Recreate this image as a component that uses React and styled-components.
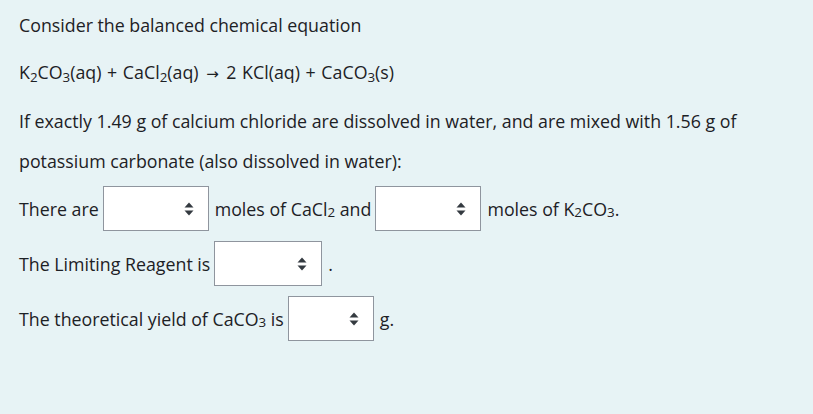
import React from 'react';
import styled, { createGlobalStyle } from 'styled-components';

const GlobalStyle = createGlobalStyle`
    html, body {
        margin: 0;
        padding: 0;
        background: #e7f3f5;
    }
    body {
        font-family: 'Open Sans', 'Noto Sans', sans-serif;
        color: #1d2125;
    }
`;

const Formulation = styled.div`
    width: 813px;
    height: 414px;
    box-sizing: border-box;
    background: #e7f3f5;
    padding: 12px 19px 0;
    font-size: 17.8px;
`;

const Line = styled.p`
    margin: 0 0 ${({ gap }) => gap}px;
    line-height: ${({ lh }) => lh}px;
    white-space: nowrap;
    word-spacing: ${({ ws }) => ws || 0}px;
`;

const Sub = styled.sub`
    font-size: 75%;
    line-height: 0;
    position: relative;
    vertical-align: baseline;
    bottom: -0.25em;
`;

const YieldsTo = styled.span`
    font-family: 'DejaVu Sans', sans-serif;
    font-size: 15px;
    margin: 0 2px;
`;

const AnswerRow = styled.div`
    display: flex;
    align-items: center;
    height: 45px;
    margin-bottom: 10px;
    white-space: pre;
`;

const SelectWrap = styled.span`
    position: relative;
    display: inline-block;
    margin: 0 6px 0 4px;
`;

const Select = styled.select`
    appearance: none;
    -webkit-appearance: none;
    width: ${({ w }) => w}px;
    height: 45px;
    box-sizing: border-box;
    border: 1px solid #8f959e;
    border-radius: 0;
    background: #fff;
    font: inherit;
    display: block;
    padding: 0 30px 0 10px;
`;

const Arrow = styled.svg`
    position: absolute;
    right: 15px;
    top: 50%;
    margin-top: -7px;
    pointer-events: none;
`;

const SelectBox = ({ w }) => (
    <SelectWrap>
        <Select w={w} defaultValue="">
            <option value=""></option>
        </Select>
        <Arrow width="10" height="14" viewBox="0 0 10 14">
            <path d="M5 0.5 L9.5 5.5 L0.5 5.5 Z" fill="#343a40" />
            <path d="M5 13.5 L9.5 8.5 L0.5 8.5 Z" fill="#343a40" />
        </Arrow>
    </SelectWrap>
);

export default function App() {
    return (
        <>
            <GlobalStyle />
            <Formulation>
                <Line lh={27} gap={20}>Consider the balanced chemical equation</Line>
                <Line lh={27} gap={13} ws={1}>
                    K<Sub>2</Sub>CO<Sub>3</Sub>(aq) + CaCl<Sub>2</Sub>(aq) <YieldsTo>→</YieldsTo> 2 KCl(aq) + CaCO<Sub>3</Sub>(s)
                </Line>
                <Line lh={40} gap={5}>
                    If exactly 1.49 g of calcium chloride are dissolved in water, and are mixed with 1.56 g of
                    <br />
                    potassium carbonate (also dissolved in water):
                </Line>
                <AnswerRow>
                    There are
                    <SelectBox w={106} />
                    moles of CaCl<Sub>2</Sub> and
                    <SelectBox w={106} />
                    moles of K<Sub>2</Sub>CO<Sub>3</Sub>.
                </AnswerRow>
                <AnswerRow>
                    The Limiting Reagent is
                    <SelectBox w={108} />
                    .
                </AnswerRow>
                <AnswerRow>
                    The theoretical yield of CaCO<Sub>3</Sub> is
                    <SelectBox w={86} />
                    g.
                </AnswerRow>
            </Formulation>
        </>
    );
}
